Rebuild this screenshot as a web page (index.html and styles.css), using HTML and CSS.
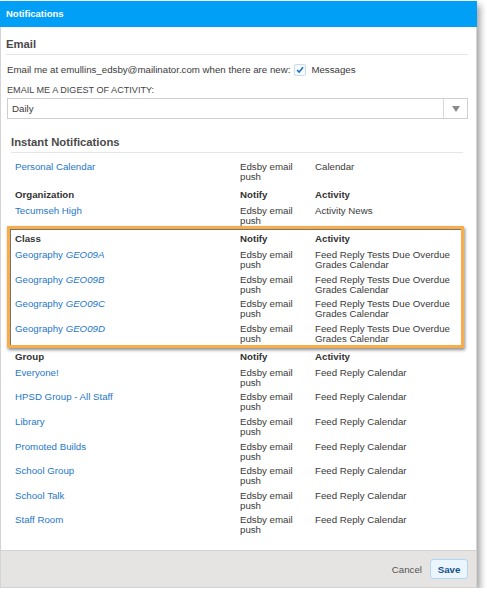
FILE: index.html
```html
<!DOCTYPE html>
<html>
<head>
<meta charset="utf-8">
<link rel="stylesheet" href="styles.css">
</head>
<body>
<div class="dialog">
  <div class="hdr">Notifications</div>
  <div class="main">
    <section class="email">
      <h2 class="h2">Email</h2>
      <div class="emailline">
        <span>Email me at emullins_edsby@mailinator.com when there are new:</span>
        <span class="cb"><svg viewBox="0 0 12 12" width="12" height="12"><path d="M2.6 6.2 L5 8.6 L9.6 2.8" fill="none" stroke="#1c6cc0" stroke-width="1.9"/></svg></span>
        <span class="msg">Messages</span>
      </div>
      <div class="lbl">EMAIL ME A DIGEST OF ACTIVITY:</div>
      <div class="select">
        <span class="val">Daily</span>
        <span class="arr"><span class="tri"></span></span>
      </div>
    </section>
    <section class="instant">
      <h2 class="h2">Instant Notifications</h2>
      <div class="rows">
        <div class="row"><a class="name">Personal Calendar</a><span class="c2">Edsby email push</span><span class="c3">Calendar</span></div>
        <div class="row head"><span class="name">Organization</span><span class="c2">Notify</span><span class="c3">Activity</span></div>
        <div class="row"><a class="name">Tecumseh High</a><span class="c2">Edsby email push</span><span class="c3">Activity News</span></div>
        <div class="classgroup">
          <div class="row head"><span class="name">Class</span><span class="c2">Notify</span><span class="c3">Activity</span></div>
          <div class="row"><a class="name">Geography <i>GEO09A</i></a><span class="c2">Edsby email push</span><span class="c3">Feed Reply Tests Due Overdue Grades Calendar</span></div>
          <div class="row"><a class="name">Geography <i>GEO09B</i></a><span class="c2">Edsby email push</span><span class="c3">Feed Reply Tests Due Overdue Grades Calendar</span></div>
          <div class="row"><a class="name">Geography <i>GEO09C</i></a><span class="c2">Edsby email push</span><span class="c3">Feed Reply Tests Due Overdue Grades Calendar</span></div>
          <div class="row"><a class="name">Geography <i>GEO09D</i></a><span class="c2">Edsby email push</span><span class="c3">Feed Reply Tests Due Overdue Grades Calendar</span></div>
        </div>
        <div class="row head"><span class="name">Group</span><span class="c2">Notify</span><span class="c3">Activity</span></div>
        <div class="row"><a class="name">Everyone!</a><span class="c2">Edsby email push</span><span class="c3">Feed Reply Calendar</span></div>
        <div class="row"><a class="name">HPSD Group - All Staff</a><span class="c2">Edsby email push</span><span class="c3">Feed Reply Calendar</span></div>
        <div class="row"><a class="name">Library</a><span class="c2">Edsby email push</span><span class="c3">Feed Reply Calendar</span></div>
        <div class="row"><a class="name">Promoted Builds</a><span class="c2">Edsby email push</span><span class="c3">Feed Reply Calendar</span></div>
        <div class="row"><a class="name">School Group</a><span class="c2">Edsby email push</span><span class="c3">Feed Reply Calendar</span></div>
        <div class="row"><a class="name">School Talk</a><span class="c2">Edsby email push</span><span class="c3">Feed Reply Calendar</span></div>
        <div class="row"><a class="name">Staff Room</a><span class="c2">Edsby email push</span><span class="c3">Feed Reply Calendar</span></div>
      </div>
    </section>
  </div>
  <div class="ftr">
    <span class="cancel">Cancel</span>
    <span class="save">Save</span>
  </div>
</div>
</body>
</html>
```
FILE: styles.css
```css
* { box-sizing: border-box; }
html, body { margin: 0; padding: 0; background: #fff; }
body {
  font-family: "Liberation Sans", Arial, sans-serif;
  font-size: 9.7px;
  color: #3a3a3a;
  padding-top: 1px;
}
.dialog {
  width: 477px;
  height: 587px;
  border: 1px solid #d4d4d4;
  border-top: none;
  display: flex;
  flex-direction: column;
  box-shadow: 3px 4px 7px rgba(0,0,0,0.38);
  background: #fff;
}
.hdr {
  height: 26px;
  background: #01a0f6;
  color: #fff;
  font-weight: bold;
  font-size: 9.5px;
  display: flex;
  align-items: center;
  padding-bottom: 1px;
  margin: 0 -1px;
  padding-left: 6px;
}
.main { flex: 1; display: flex; flex-direction: column; }
.h2 {
  margin: 0;
  font-size: 11.3px;
  font-weight: bold;
  color: #4a4a4a;
  border-bottom: 1px solid #e6e6e6;
  line-height: 15px;
  padding-bottom: 2px;
}
.email { padding: 10px 8px 0 5px; }
.emailline {
  display: flex;
  align-items: center;
  margin-top: 8px;
  height: 14px;
  line-height: 14px;
  padding-left: 1px;
}
.cb {
  width: 12px;
  height: 12px;
  border: 1px solid #c9dced;
  border-radius: 2px;
  display: flex;
  align-items: center;
  justify-content: center;
  background: #f7fbfe;
  margin-left: 4px;
}
.cb svg { display: block; }
.msg { margin-left: 5px; }
.lbl {
  font-size: 9.1px;
  margin-top: 7px;
  line-height: 12px;
  color: #444;
  padding-left: 1px;
}
.select {
  margin-top: 2px;
  height: 21px;
  border: 1px solid #cfcfcf;
  display: flex;
  align-items: center;
  margin-left: 1px;
}
.val { flex: 1; padding-left: 4px; }
.arr {
  width: 24px;
  height: 100%;
  border-left: 1px solid #d8d8d8;
  display: flex;
  align-items: center;
  justify-content: center;
}
.tri {
  width: 0; height: 0;
  border-left: 4.5px solid transparent;
  border-right: 4.5px solid transparent;
  border-top: 6px solid #8a8a8a;
}
.instant { padding: 16px 13px 0 10px; }
.rows { padding-left: 4px; padding-top: 9px; }
.row {
  display: grid;
  grid-template-columns: 225px 75px 1fr;
  line-height: 10px;
  height: 24.6px;
}
.row.head {
  height: 19.4px;
  padding-top: 3.4px;
  font-weight: bold;
  color: #333;
}
.name { color: #1e77c8; text-decoration: none; }
.row.head .name { color: #333; }
.c2 { padding-right: 10px; }
.classgroup { position: relative; }
.classgroup::after {
  content: "";
  position: absolute;
  left: -8px;
  right: -1px;
  top: -4.6px;
  bottom: 0;
  border: 3px solid #f8ad4b;
  box-shadow: inset 1px 1px 0 rgba(70,70,70,0.75), 1px 2px 3px rgba(0,0,0,0.45);
  pointer-events: none;
}
.ftr {
  height: 37px;
  background: #e6e4e2;
  border-top: 1px solid #d2d2d2;
  display: flex;
  align-items: center;
  justify-content: flex-end;
  padding-right: 8px;
  gap: 8px;
}
.cancel { color: #555; }
.save {
  width: 38px;
  height: 20px;
  border: 1px solid #b2d8f3;
  background: #eaf5fd;
  border-radius: 3px;
  color: #16508a;
  font-weight: bold;
  display: flex;
  align-items: center;
  justify-content: center;
}
```
